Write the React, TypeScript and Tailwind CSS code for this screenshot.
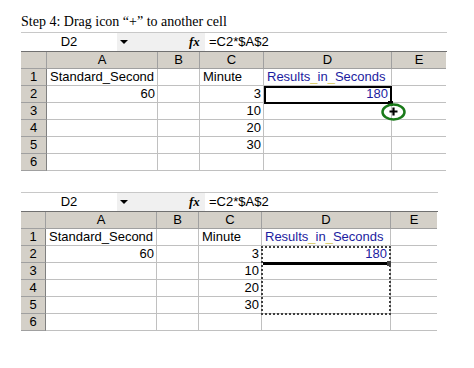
import React from 'react';

type Sheet = {
  cols: string;
  width: string;
  dHdr: string;
};

const ROWS: { a?: string; c?: string; d?: string }[] = [
  { a: 'Standard_Second', c: 'Minute', d: 'Results_in_Seconds' },
  { a: '60', c: '3', d: '180' },
  { c: '10' },
  { c: '20' },
  { c: '30' },
  {},
];

function FormulaBar({ width }: { width: string }) {
  return (
    <div className={`flex h-[19px] border-t border-[#c8c8c8] bg-[#f0f0f0] text-[13px] leading-[18px] ${width}`}>
      <div className="w-[96px] bg-white text-center">D2</div>
      <div className="flex w-[14px] items-center justify-center">
        <div className="h-0 w-0 border-x-[4px] border-t-[4px] border-x-transparent border-t-black" />
      </div>
      <div className="w-[58px]" />
      <div className="w-[16px] font-['Liberation_Serif',serif] text-[13px] font-bold italic">fx</div>
      <div className="flex-1 bg-white pl-[4px]">=C2*$A$2</div>
    </div>
  );
}

function Results() {
  return (
    <>
      Results<span className="text-[#d8c860]">_</span>in<span className="text-[#d8c860]">_</span>Seconds
    </>
  );
}

function Grid({ sheet, children }: { sheet: Sheet; children?: React.ReactNode }) {
  const hdr = 'h-[17px] border-b border-r border-[#a0a0a0] bg-[#d4d0c8] text-center leading-[16px]';
  const cell = 'h-[17px] border-b border-r border-[#c0c0c0] leading-[16px] overflow-visible whitespace-nowrap';
  return (
    <div className={`relative grid border-t border-[#707070] text-[13px] ${sheet.cols} ${sheet.width}`}>
      <div className={hdr} />
      <div className={hdr}>A</div>
      <div className={hdr}>B</div>
      <div className={hdr}>C</div>
      <div className={`${hdr} ${sheet.dHdr}`}>D</div>
      <div className={`${hdr} border-r-0`}>E</div>
      {ROWS.map((r, i) => (
        <React.Fragment key={i}>
          <div className={`${hdr} border-r-[#808080] ${i === 1 ? 'bg-[#b6bedc]' : ''}`}>{i + 1}</div>
          <div className={`${cell} ${i === 1 ? 'pr-[2px] text-right' : 'pl-[3px]'}`}>{r.a}</div>
          <div className={cell} />
          <div className={`${cell} ${i === 0 ? 'pl-[3px]' : 'pr-[2px] text-right'}`}>{r.c}</div>
          <div className={`${cell} text-[#1c1ca0] ${i === 0 ? 'pl-[3px]' : 'pr-[3px] text-right'}`}>
            {i === 0 ? <Results /> : r.d}
          </div>
          <div className={`${cell} border-r-0`} />
        </React.Fragment>
      ))}
      {children}
    </div>
  );
}

export default function App() {
  const top: Sheet = {
    cols: 'grid-cols-[26px_111px_42px_64px_128px_54px]',
    width: 'w-[426px]',
    dHdr: 'bg-[#b6bedc]',
  };
  const bottom: Sheet = {
    cols: 'grid-cols-[25px_111px_42px_63px_129px_46px]',
    width: 'w-[417px]',
    dHdr: 'bg-[#b6bedc]',
  };

  return (
    <div className="h-[368px] w-[474px] bg-white pl-[21px] font-['Liberation_Sans',Arial,sans-serif] text-black">
      <div className="h-[32px] pt-[14px] font-['Liberation_Serif','Times_New_Roman',serif] text-[14px] leading-[16px]">
        Step 4: Drag icon “+” to another cell
      </div>
      <FormulaBar width={top.width} />
      <Grid sheet={top}>
        {/* selected cell D2 */}
        <div className="absolute left-[243px] top-[34px] h-[18px] w-[128px] border-[2px] border-black" />
        <div className="absolute left-[367px] top-[49px] h-[5px] w-[5px] bg-black" />
        {/* drag cursor */}
        <svg className="absolute left-[360px] top-[51px]" width="26" height="18" viewBox="0 0 26 18">
          <ellipse cx="12.5" cy="9" rx="11" ry="7.5" fill="none" stroke="#1a7a1a" strokeWidth="2.5" />
          <path d="M12.5 4.5v8M8.5 8.5h8" stroke="black" strokeWidth="2.2" />
        </svg>
      </Grid>
      <div className="h-[21px]" />
      <FormulaBar width={bottom.width} />
      <Grid sheet={bottom}>
        {/* copy marquee D2:D5 */}
        <div className="absolute left-[240px] top-[34px] h-[69px] w-[130px] border-[2px] border-dotted border-[#404040]" />
        <div className="absolute left-[242px] top-[50px] h-[3px] w-[125px] bg-black" />
        <div className="absolute left-[366px] top-[49px] h-[5px] w-[4px] bg-[#404040]" />
      </Grid>
    </div>
  );
}
